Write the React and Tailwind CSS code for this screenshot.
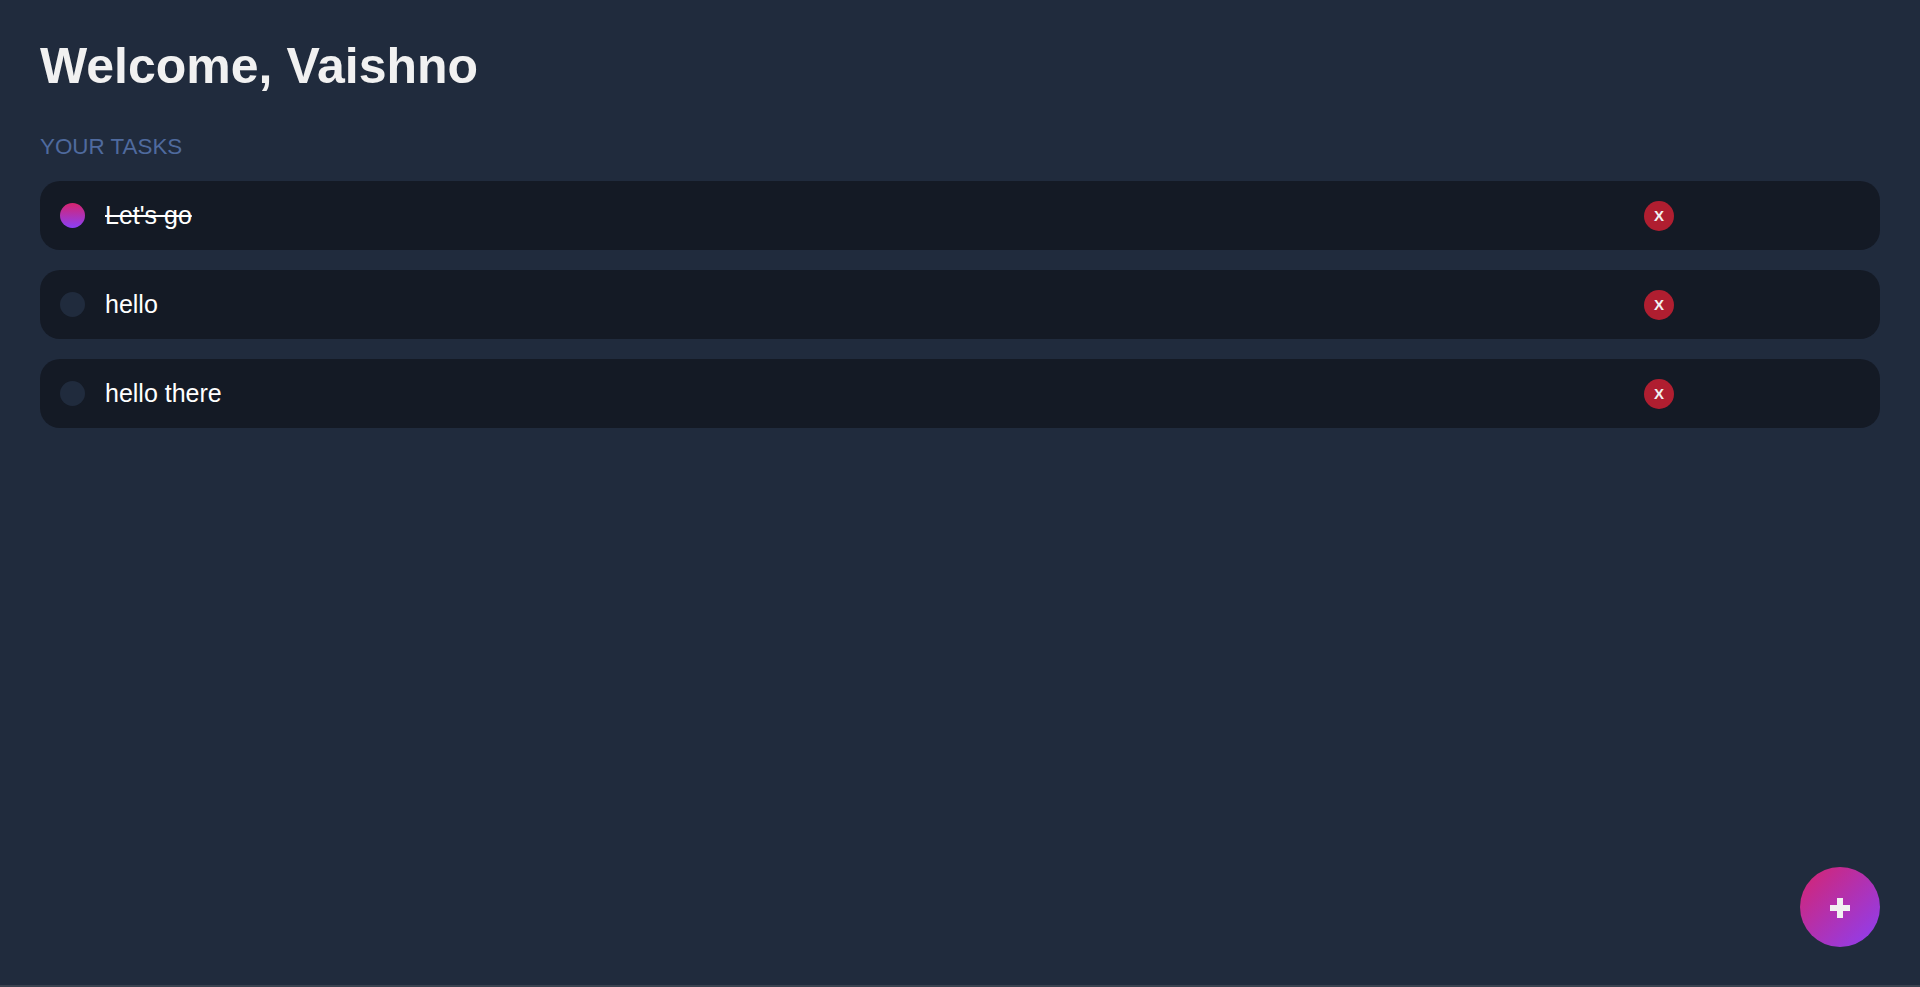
import React from "react";

const tasks = [
  { id: 1, text: "Let's go", done: true },
  { id: 2, text: "hello", done: false },
  { id: 3, text: "hello there", done: false },
];

function TaskRow({ task }) {
  return (
    <div className="flex items-center h-[69px] px-5 rounded-[20px] bg-[#141a25]">
      {/* Checkbox */}
      <span
        className={
          task.done
            ? "w-[25px] h-[25px] rounded-full bg-linear-to-b/srgb from-[#d6246f] to-[#8b3ff5]"
            : "w-[25px] h-[25px] rounded-full bg-[#202b3d]"
        }
      />
      <span
        className={
          task.done
            ? "ml-5 flex-1 text-[25px] text-white line-through"
            : "ml-5 flex-1 text-[25px] text-white"
        }
      >
        {task.text}
      </span>
      <button className="flex items-center justify-center w-[30px] h-[30px] mr-[186px] pt-[2px] rounded-full bg-[#b01e30] text-[#f1f1f1] text-[15px] font-bold">
        X
      </button>
    </div>
  );
}

export default function App() {
  return (
    <div className="relative h-[987px] overflow-hidden bg-[#202b3d] font-['Liberation_Sans',Arial,sans-serif] text-[#f1f1f1] border-b-2 border-[#3a4250]">
      <section className="px-10 pt-[36px]">
        <h1 className="text-[50px] leading-[60px] font-bold">Welcome, Vaishno</h1>

        <h2 className="mt-[38px] text-[22.4px] leading-[26px] text-[#4f6a9e]">YOUR TASKS</h2>

        <div className="mt-[21px] flex flex-col gap-5">
          {tasks.map((task) => (
            <TaskRow key={task.id} task={task} />
          ))}
        </div>
      </section>

      {/* Add button */}
      <button className="absolute right-10 bottom-[38px] flex items-center justify-center w-20 h-20 rounded-full bg-linear-to-br/srgb from-[#d6246f] to-[#8b3ff5]">
        <svg className="mt-[2px]" width="20" height="20" viewBox="0 0 20 20" fill="#f1f1f1">
          <path d="M7 0h6v7h7v6h-7v7H7v-7H0V7h7z" />
        </svg>
      </button>
    </div>
  );
}
